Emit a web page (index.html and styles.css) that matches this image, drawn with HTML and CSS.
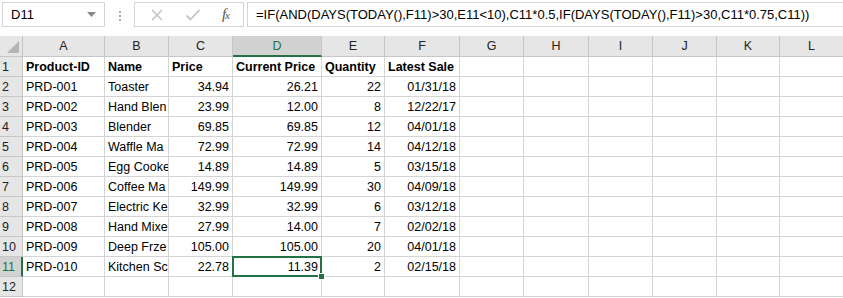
FILE: index.html
```html
<!DOCTYPE html>
<html lang="en">

<head>
    <meta charset="UTF-8">
    <title>Sheet</title>
    <link rel="stylesheet" href="styles.css">
</head>

<body>
    <div class="formula-bar">
        <div class="name-box">
            <span>D11</span>
            <svg class="caret" width="9" height="5" viewBox="0 0 9 5"><path d="M0 0h9L4.5 5z" fill="#8a8a8a"/></svg>
        </div>
        <div class="grip">
            <span></span><span></span><span></span>
        </div>
        <div class="fx-buttons">
            <svg width="14" height="14" viewBox="0 0 14 14"><path d="M2 2l10 10M12 2L2 12" stroke="#c4c4c4" stroke-width="1.6" fill="none"/></svg>
            <svg width="16" height="14" viewBox="0 0 16 14"><path d="M1.5 7.5l4 4L14.5 2" stroke="#c4c4c4" stroke-width="1.8" fill="none"/></svg>
            <span class="fx">f<small>x</small></span>
        </div>
        <div class="formula-input">=IF(AND(DAYS(TODAY(),F11)&gt;30,E11&lt;10),C11*0.5,IF(DAYS(TODAY(),F11)&gt;30,C11*0.75,C11))</div>
    </div>

    <table class="sheet">
        <colgroup>
            <col style="width:23px">
            <col style="width:82px">
            <col style="width:64px">
            <col style="width:64px">
            <col style="width:89px">
            <col style="width:63px">
            <col style="width:75px">
            <col style="width:64px">
            <col style="width:65px">
            <col style="width:64px">
            <col style="width:64px">
            <col style="width:63px">
            <col style="width:64px">
        </colgroup>
        <thead>
            <tr>
                <th class="corner"><span class="tri"></span></th>
                <th>A</th><th>B</th><th>C</th><th class="sel">D</th><th>E</th><th>F</th>
                <th>G</th><th>H</th><th>I</th><th>J</th><th>K</th><th>L</th>
            </tr>
        </thead>
        <tbody id="rows"></tbody>
    </table>

    <script>
        const data = [
            ["Product-ID", "Name", "Price", "Current Price", "Quantity", "Latest Sale"],
            ["PRD-001", "Toaster", "34.94", "26.21", "22", "01/31/18"],
            ["PRD-002", "Hand Blen", "23.99", "12.00", "8", "12/22/17"],
            ["PRD-003", "Blender", "69.85", "69.85", "12", "04/01/18"],
            ["PRD-004", "Waffle Ma", "72.99", "72.99", "14", "04/12/18"],
            ["PRD-005", "Egg Cooke", "14.89", "14.89", "5", "03/15/18"],
            ["PRD-006", "Coffee Ma", "149.99", "149.99", "30", "04/09/18"],
            ["PRD-007", "Electric Ke", "32.99", "32.99", "6", "03/12/18"],
            ["PRD-008", "Hand Mixe", "27.99", "14.00", "7", "02/02/18"],
            ["PRD-009", "Deep Frze", "105.00", "105.00", "20", "04/01/18"],
            ["PRD-010", "Kitchen Sc", "22.78", "11.39", "2", "02/15/18"],
            ["", "", "", "", "", ""]
        ];

        const tbody = document.getElementById('rows');
        data.forEach((row, i) => {
            const tr = document.createElement('tr');
            if (i === 0) tr.classList.add('head-row');
            const th = document.createElement('th');
            th.textContent = i + 1;
            if (i === 10) th.classList.add('sel');
            tr.appendChild(th);
            for (let c = 0; c < 12; c++) {
                const td = document.createElement('td');
                const val = row[c] || '';
                td.textContent = val;
                if (i > 0 && c >= 2 && c <= 5) td.classList.add('num');
                if (i === 10 && c === 3) td.classList.add('active');
                tr.appendChild(td);
            }
            tbody.appendChild(tr);
        });
    </script>
</body>

</html>
```

FILE: styles.css
```css
body {
    margin: 0;
    background-color: #fff;
    font-family: "Liberation Sans", Arial, sans-serif;
    font-size: 12.5px;
    color: #000;
    overflow: hidden;
}

.formula-bar {
    display: flex;
    align-items: flex-start;
    height: 36px;
    padding-top: 2px;
    box-sizing: border-box;
    background-color: #fff;
}

.name-box {
    display: flex;
    align-items: center;
    justify-content: space-between;
    width: 103px;
    height: 25px;
    margin-left: 2px;
    padding: 0 8px 0 8px;
    box-sizing: border-box;
    border: 1px solid #d4d4d4;
    font-size: 13px;
}

.grip {
    display: flex;
    flex-direction: column;
    gap: 2px;
    width: 29px;
    align-items: center;
    padding-top: 9px;
}

.grip span {
    width: 2px;
    height: 2px;
    background-color: #a6a6a6;
}

.fx-buttons {
    display: flex;
    align-items: center;
    justify-content: space-between;
    width: 110px;
    height: 25px;
    padding: 0 14px 0 15px;
    box-sizing: border-box;
    border: 1px solid #d4d4d4;
}

.fx {
    font-family: "Liberation Serif", serif;
    font-style: italic;
    font-size: 15px;
    color: #555;
    letter-spacing: -1px;
}

.fx small {
    font-size: 11px;
}

.formula-input {
    flex: 1;
    height: 25px;
    margin-left: 3px;
    padding-left: 8px;
    box-sizing: border-box;
    border: 1px solid #d4d4d4;
    border-right: none;
    line-height: 23px;
    font-size: 13px;
    white-space: nowrap;
    overflow: hidden;
}

.sheet {
    table-layout: fixed;
    width: 844px;
    border-collapse: separate;
    border-spacing: 0;
}

.sheet tbody tr {
    height: 20px;
}

.sheet th,
.sheet td {
    height: 20px;
    padding: 0 3px 1px 3px;
    box-sizing: border-box;
    border-right: 1px solid #d4d4d4;
    border-bottom: 1px solid #d4d4d4;
    line-height: 15px;
    vertical-align: bottom;
    white-space: nowrap;
    overflow: hidden;
}

.sheet th {
    background-color: #e6e6e6;
    font-weight: normal;
    text-align: center;
    border-color: #c6c6c6;
    color: #222;
}

.sheet thead tr {
    height: 21px;
}

.sheet thead th {
    height: 21px;
    padding-bottom: 2px;
}

.sheet tbody th {
    padding: 0 0 1px 2px;
    text-align: left;
}

.sheet th.sel {
    background-color: #d2d2d2;
    color: #217346;
}

.sheet thead th.sel {
    border-bottom: 2px solid #217346;
    padding-bottom: 1px;
}

.sheet tbody th.sel {
    border-right: 2px solid #217346;
}

.corner {
    position: relative;
}

.tri {
    position: absolute;
    right: 3px;
    bottom: 3px;
    width: 0;
    height: 0;
    border-left: 12px solid transparent;
    border-bottom: 12px solid #b4b4b4;
}

.head-row td {
    font-weight: bold;
}

.sheet td.num {
    text-align: right;
}

.sheet td.active {
    position: relative;
    overflow: visible;
}

.sheet td.active::before {
    content: "";
    position: absolute;
    left: -1px;
    top: -1px;
    right: -1px;
    bottom: -1px;
    border: 2px solid #217346;
}

.sheet td.active::after {
    content: "";
    position: absolute;
    right: -4px;
    bottom: -4px;
    width: 5px;
    height: 5px;
    background-color: #217346;
    border: 1px solid #fff;
}
```
